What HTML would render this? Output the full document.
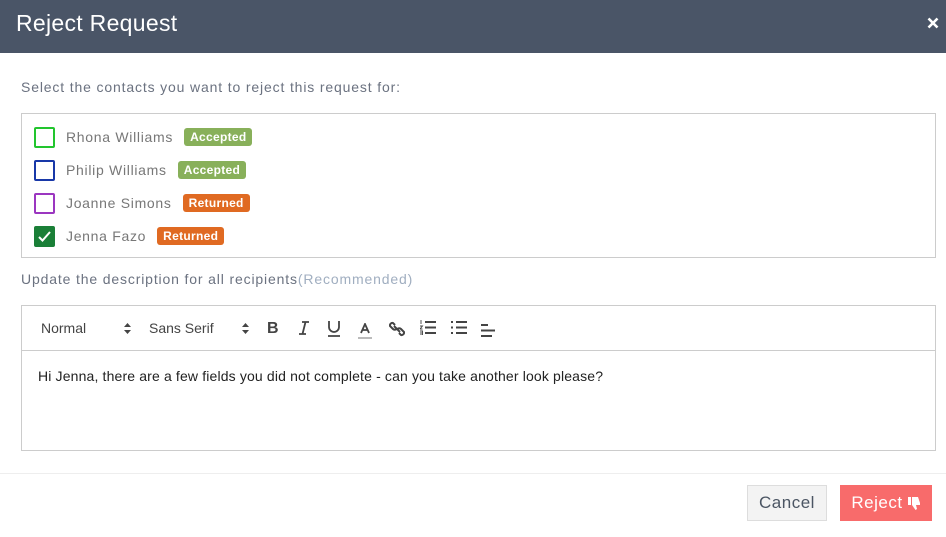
<!DOCTYPE html>
<html><head><style>
*{box-sizing:border-box;margin:0;padding:0}
body{width:946px;height:537px;background:#fff;font-family:"Liberation Sans",sans-serif;position:relative;overflow:hidden}
.hdr{position:absolute;left:0;top:0;width:946px;height:53px;background:#4a5567}
.hdr h1{position:absolute;left:16px;top:10px;font-size:23px;font-weight:normal;color:#fff;letter-spacing:0.3px}
.x{position:absolute;right:7px;top:17px}
.lbl{position:absolute;left:21px;font-size:14px;color:#6b7280;letter-spacing:0.85px}
.box{position:absolute;left:21px;top:113px;width:915px;height:145px;border:1px solid #ccc}
.row{position:absolute;left:12px;height:22px;display:flex;align-items:center}
.cb{width:21px;height:21px;border:2px solid;border-radius:2px;margin-right:11px}
.nm{font-size:14px;color:#777;margin-right:11px;letter-spacing:0.7px}
.bd{font-size:12px;font-weight:bold;color:#fff;padding:2px 6px;border-radius:3px;letter-spacing:0.3px}
.g{background:#88b05a}.o{background:#e06a22}
.ed{position:absolute;left:21px;top:305px;width:915px;height:146px;border:1px solid #ccc}
.tb{height:45px;border-bottom:1px solid #ccc;position:relative;font-size:14px;color:#444}
.tb span,.tb svg{position:absolute;top:14px}
.txt{position:absolute;left:16px;top:62px;font-size:14px;color:#222;letter-spacing:0.15px}
.sep{position:absolute;left:0;top:473px;width:946px;border-top:1px solid #eee}
.btn{position:absolute;top:485px;height:36px;font-size:16px;display:flex;align-items:center;justify-content:center;letter-spacing:0.5px}
</style></head><body>
<div class="hdr"><h1>Reject Request</h1><svg class="x" width="12" height="12" viewBox="0 0 12 12"><path d="M1.5 1.5l9 9M10.5 1.5l-9 9" stroke="#fff" stroke-width="2.6"/></svg></div>
<div class="lbl" style="top:79px">Select the contacts you want to reject this request for:</div>
<div class="box">
<div class="row" style="top:12px"><div class="cb" style="border-color:#22c52e"></div><span class="nm">Rhona Williams</span><span class="bd g">Accepted</span></div>
<div class="row" style="top:45px"><div class="cb" style="border-color:#1838a8"></div><span class="nm">Philip Williams</span><span class="bd g">Accepted</span></div>
<div class="row" style="top:78px"><div class="cb" style="border-color:#9b36c0"></div><span class="nm">Joanne Simons</span><span class="bd o">Returned</span></div>
<div class="row" style="top:111px"><div class="cb" style="border-color:#1a7f37;background:#1a7f37;position:relative"><svg width="17" height="17" viewBox="0 0 17 17" style="position:absolute;left:0;top:0"><path d="M3 9l3.5 3.5L14 4" stroke="#fff" stroke-width="2" fill="none"/></svg></div><span class="nm">Jenna Fazo</span><span class="bd o">Returned</span></div>
</div>
<div class="lbl" style="top:271px">Update the description for all recipients<span style="color:#a0aec0">(Recommended)</span></div>
<div class="ed"><div class="tb">
<span style="left:19px">Normal</span>
<svg style="left:102px;top:17px" width="7" height="11" viewBox="0 0 7 11"><path d="M0 4L3.5 0 7 4zM0 7l3.5 4L7 7z" fill="#444"/></svg>
<span style="left:127px">Sans Serif</span>
<svg style="left:220px;top:17px" width="7" height="11" viewBox="0 0 7 11"><path d="M0 4L3.5 0 7 4zM0 7l3.5 4L7 7z" fill="#444"/></svg>
<span style="left:245px;font-weight:bold;font-size:16px;top:14px">B</span>
<svg style="left:276px;top:15px" width="12" height="14" viewBox="0 0 12 14"><path d="M4 1h7M1 13h7M7.5 1L4.5 13" stroke="#444" stroke-width="1.8" fill="none"/></svg>
<svg style="left:305px;top:14px" width="14" height="17" viewBox="0 0 14 17"><path d="M2 1v6a5 5 0 0 0 10 0V1M1 16h12" stroke="#444" stroke-width="1.8" fill="none"/></svg>
<svg style="left:336px;top:17px" width="14" height="16" viewBox="0 0 14 16"><path d="M3 10L7 1l4 9M4.5 7h5" stroke="#444" stroke-width="1.8" fill="none"/><path d="M0 15h14" stroke="#bbb" stroke-width="2"/></svg>
<svg style="left:367px;top:15px" width="16" height="16" viewBox="0 0 16 16"><path d="M6 4L4 2a2.5 2.5 0 0 0-3 3l3 3a2.5 2.5 0 0 0 3.5 0M10 12l2 2a2.5 2.5 0 0 0 3-3l-3-3a2.5 2.5 0 0 0-3.5 0M5 5l6 6" stroke="#444" stroke-width="2" fill="none"/></svg>
<svg style="left:398px;top:14px" width="16" height="15" viewBox="0 0 16 15"><path d="M5 2h11M5 7.5h11M5 13h11" stroke="#444" stroke-width="2"/><path d="M1 0v4M0 6h2.5L0 9h2.5M0 11h2.5v4H0M0 13h2.5" stroke="#444" stroke-width="0.9" fill="none"/></svg>
<svg style="left:429px;top:14px" width="16" height="15" viewBox="0 0 16 15"><path d="M5 2h11M5 7.5h11M5 13h11M0 2h2M0 7.5h2M0 13h2" stroke="#444" stroke-width="2"/></svg>
<svg style="left:459px;top:17px" width="16" height="15" viewBox="0 0 16 15"><path d="M0 2h7M0 7.5h14M0 13h11" stroke="#444" stroke-width="2"/></svg>
</div><div class="txt">Hi Jenna, there are a few fields you did not complete - can you take another look please?</div></div>
<div class="sep"></div>
<div class="btn" style="left:747px;width:80px;background:#f3f3f3;border:1px solid #ddd;color:#4b5563;font-size:17px">Cancel</div>
<div class="btn" style="left:840px;width:92px;background:#f86b6b;color:#fff;font-size:17px">Reject<svg style="margin-left:4px" width="14" height="15" viewBox="0 0 14 15"><path d="M1 1h3v8H1zM5 1h6l2 6v2H9l1 4-1.5 1L5 9z" fill="#fff"/></svg></div>
</body></html>
